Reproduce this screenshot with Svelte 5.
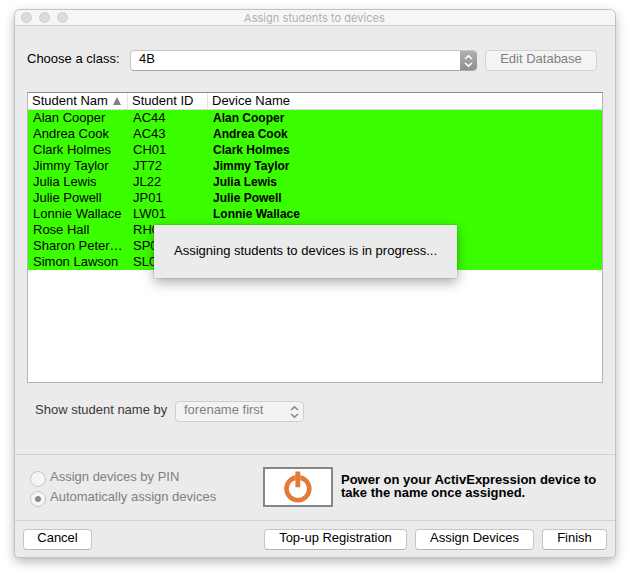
<script>
	const students = [
		{ name: 'Alan Cooper', id: 'AC44', device: 'Alan Cooper' },
		{ name: 'Andrea Cook', id: 'AC43', device: 'Andrea Cook' },
		{ name: 'Clark Holmes', id: 'CH01', device: 'Clark Holmes' },
		{ name: 'Jimmy Taylor', id: 'JT72', device: 'Jimmy Taylor' },
		{ name: 'Julia Lewis', id: 'JL22', device: 'Julia Lewis' },
		{ name: 'Julie Powell', id: 'JP01', device: 'Julie Powell' },
		{ name: 'Lonnie Wallace', id: 'LW01', device: 'Lonnie Wallace' },
		{ name: 'Rose Hall', id: 'RH01', device: '' },
		{ name: 'Sharon Peter…', id: 'SP01', device: '' },
		{ name: 'Simon Lawson', id: 'SL01', device: '' }
	];

	const modes = ['Assign devices by PIN', 'Automatically assign devices'];
	let mode = modes[1];
</script>

<div class="page">
	<div class="window">
		<div class="titlebar">
			<div class="lights"><i></i><i></i><i></i></div>
			<span class="title">Assign students to devices</span>
		</div>

		<div class="class-row">
			<span class="class-label">Choose a class:</span>
			<div class="select">
				<span class="value">4B</span>
				<span class="stepper">
					<svg width="17" height="20" viewBox="0 0 17 20">
						<path d="M5 8 8.5 4.8 12 8M5 12 8.5 15.2 12 12" />
					</svg>
				</span>
			</div>
			<button class="button edit" disabled><span>Edit Database</span></button>
		</div>

		<div class="table">
			<div class="row head">
				<div class="cell">
					<span>Student Nam</span>
					<svg class="sort" width="8" height="8" viewBox="0 0 8 8"><path d="M4 0 8 8H0z" /></svg>
				</div>
				<div class="cell"><span>Student ID</span></div>
				<div class="cell"><span>Device Name</span></div>
			</div>
			{#each students as student}
				<div class="row">
					<div class="cell"><span>{student.name}</span></div>
					<div class="cell"><span>{student.id}</span></div>
					<div class="cell"><b>{student.device}</b></div>
				</div>
			{/each}
		</div>

		<div class="name-row">
			<span class="name-label">Show student name by</span>
			<div class="select small">
				<span class="value">forename first</span>
				<span class="stepper">
					<svg width="17" height="20" viewBox="0 0 17 20">
						<path d="M5 8 8.5 4.8 12 8M5 12 8.5 15.2 12 12" />
					</svg>
				</span>
			</div>
		</div>

		<div class="modes">
			<div class="radios">
				{#each modes as item}
					<div class="radio">
						<i class:checked={item === mode}></i>
						<span>{item}</span>
					</div>
				{/each}
			</div>
			<div class="power">
				<svg width="28" height="32" viewBox="0 0 28 32">
					<circle cx="13.9" cy="17.8" r="11.4" fill="none" stroke="#e27b35" stroke-width="4.6" />
					<path d="M10.9 3.5h5.8v6h-5.8z" fill="#eda77a" />
					<path d="M11.4.5h4.8v15.8h-4.8z" fill="#e27b35" />
				</svg>
			</div>
			<p class="hint">Power on your ActivExpression device to take the name once assigned.</p>
		</div>

		<div class="footer">
			<button class="button cancel"><span>Cancel</span></button>
			<button class="button topup"><span>Top-up Registration</span></button>
			<button class="button assign"><span>Assign Devices</span></button>
			<button class="button finish"><span>Finish</span></button>
		</div>

		<div class="message"><span>Assigning students to devices is in progress...</span></div>
	</div>
</div>

<style>
	:global(body) {
		background: #fff;
	}

	.page {
		box-sizing: border-box;
		width: 630px;
		height: 575px;
		padding: 10px 0 0 15px;
		overflow: hidden;
	}

	.window {
		position: relative;
		box-sizing: border-box;
		width: 600px;
		height: 547px;
		background: #ebebeb;
		border-radius: 5px 5px 4px 4px;
		box-shadow:
			0 0 0 1px #c2c2c2,
			0 4px 12px rgba(0, 0, 0, 0.32);
		font: 13px/16px 'Liberation Sans', Arial, sans-serif;
		color: #000;
		white-space: nowrap;
	}

	.titlebar {
		display: flex;
		align-items: center;
		height: 15px;
		background: #f6f6f6;
		border-bottom: 1px solid #d1d1d1;
		border-radius: 5px 5px 0 0;
	}

	.lights {
		display: flex;
		gap: 7px;
		width: 229px;
		padding-left: 6px;
		box-sizing: border-box;
	}

	.lights i {
		box-sizing: border-box;
		width: 11px;
		height: 11px;
		border: 1px solid #cecece;
		border-radius: 50%;
		background: #dcdcdc;
	}

	.title {
		padding-top: 2px;
		font: 11px/15px Inter, sans-serif;
		letter-spacing: 0.05px;
		color: #b0b0b0;
	}

	.class-row {
		display: flex;
		height: 22px;
		padding: 24px 0 0 12px;
	}

	.class-label {
		width: 103px;
		margin-top: 1px;
	}

	.select {
		box-sizing: border-box;
		display: flex;
		justify-content: space-between;
		width: 347px;
		height: 21px;
		border: 1px solid #c4c4c4;
		border-bottom-color: #a8a8a8;
		border-right: 0;
		border-radius: 4px;
		background: #fff;
		overflow: hidden;
	}

	.value {
		padding-left: 8px;
	}

	.stepper {
		width: 17px;
		background: linear-gradient(#b0b0b0, #8f8f8f);
	}

	.stepper svg {
		display: block;
		fill: none;
		stroke: #fff;
		stroke-width: 1.6;
	}

	.button {
		box-sizing: border-box;
		height: 21px;
		padding: 0;
		border: 1px solid #c6c6c6;
		border-bottom-color: #b4b4b4;
		border-radius: 4px;
		background: #fff;
		font: inherit;
		line-height: 16px;
		color: #000;
		display: flex;
		justify-content: center;
	}

	.edit {
		width: 112px;
		margin-left: 8px;
		border-color: #d3d3d3;
		background: #f4f4f4;
		color: #808080;
	}

	.table {
		box-sizing: border-box;
		width: 576px;
		height: 291px;
		margin: 20px 0 0 12px;
		border: 1px solid #b4b4b4;
		border-top-color: #8e8e8e;
		background: #fff;
	}

	.row {
		display: grid;
		grid-template-columns: 100px 80px 1fr;
		height: 16px;
		background: #3bff00;
	}

	.head {
		background: #fff;
		border-bottom: 1px solid #dcdcdc;
	}

	.cell {
		padding-left: 5px;
	}

	.cell b {
		font-size: 12px;
	}

	.head .cell {
		display: flex;
		justify-content: space-between;
		padding-left: 4px;
	}

	.head .cell:not(:last-child) {
		border-right: 1px solid #e2e2e2;
	}

	.sort {
		margin: 4px 6px 0 0;
		fill: #808080;
	}

	.name-row {
		display: flex;
		height: 53px;
		padding: 18px 0 0 20px;
		border-bottom: 1px solid #cfcfcf;
	}

	.name-label {
		width: 140px;
		margin-top: 1px;
		color: #3a3a3a;
	}

	.small {
		width: 129px;
		border: 1px solid #cfcfcf;
		background: #f3f3f3;
		color: #808080;
	}

	.small .stepper {
		background: none;
	}

	.small .stepper svg {
		stroke: #8c8c8c;
	}

	.modes {
		display: flex;
		box-sizing: border-box;
		height: 66px;
		padding: 12px 0 0 15px;
		border-bottom: 1px solid #cfcfcf;
	}

	.radios {
		width: 233px;
		padding-top: 2px;
		color: #808080;
	}

	.radio {
		display: flex;
		gap: 4px;
		height: 20px;
	}

	.radio i {
		box-sizing: border-box;
		width: 16px;
		height: 16px;
		margin-top: 2px;
		border: 1px solid #c6c6c6;
		border-radius: 50%;
		background: #f5f5f5;
	}

	.radio i.checked {
		background: radial-gradient(circle, #8c8c8c 2.6px, #f5f5f5 3.4px);
	}

	.power {
		box-sizing: border-box;
		display: flex;
		justify-content: center;
		width: 70px;
		height: 40px;
		padding-top: 2px;
		border: 2px solid #808890;
		background: #fff;
	}

	.hint {
		width: 262px;
		margin: 6px 0 0 8px;
		font-weight: bold;
		line-height: 13px;
		white-space: normal;
	}

	.footer {
		display: flex;
		gap: 8px;
		padding: 8px 8px 0;
	}

	.cancel {
		width: 69px;
		margin-right: auto;
	}

	.topup {
		width: 143px;
	}

	.assign {
		width: 119px;
	}

	.finish {
		width: 65px;
	}

	/* sheet over the dialog */
	.message {
		position: absolute;
		left: 139px;
		top: 215px;
		box-sizing: border-box;
		width: 303px;
		height: 53px;
		padding: 18px 20px;
		background: #ebebeb;
		box-shadow:
			0 0 1px rgba(0, 0, 0, 0.4),
			0 4px 12px rgba(0, 0, 0, 0.35);
	}
</style>
